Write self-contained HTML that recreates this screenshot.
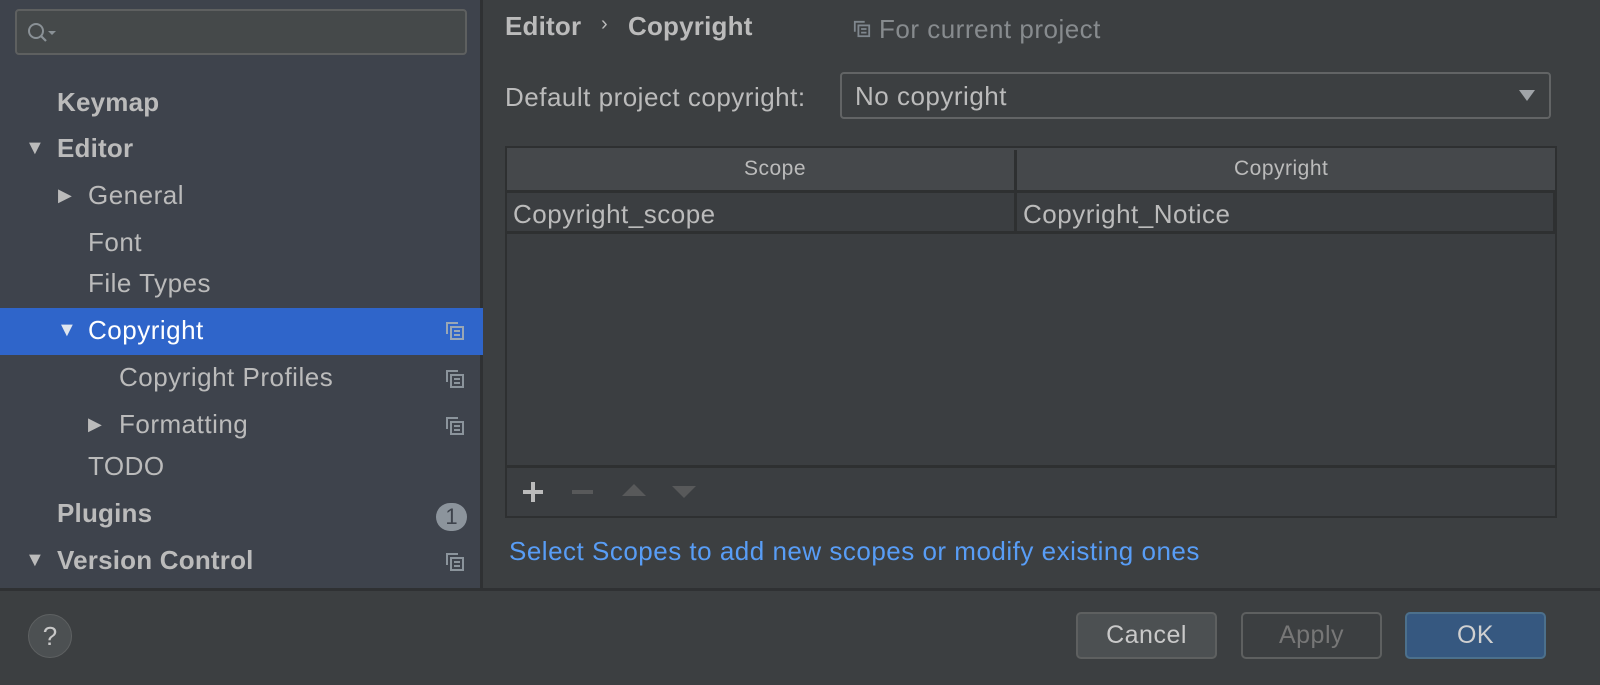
<!DOCTYPE html>
<html><head><style>
*{margin:0;padding:0;box-sizing:border-box}
body{width:1600px;height:685px;background:#3c3f41;font-family:"Liberation Sans",sans-serif;color:#bbbbbb;position:relative;overflow:hidden;letter-spacing:0.5px}
.a{position:absolute;white-space:nowrap}
#side{position:absolute;left:0;top:0;width:483px;height:588px;background:#3e434c;border-right:3px solid #2f3133}
.t{position:absolute;font-size:26px;line-height:47px;height:47px;color:#bbbbbb;white-space:nowrap}
.b{font-weight:bold;letter-spacing:0.2px}
.ic{position:absolute;left:445px;width:20px;height:20px}
</style></head><body>
<div id="side">
  <div class="a" style="left:15px;top:9px;width:452px;height:46px;border:2px solid #5e6060;border-radius:4px;background:#45494a"></div>
  <svg class="a" style="left:26px;top:20px" width="34" height="26" viewBox="0 0 34 26"><circle cx="10" cy="11" r="7" fill="none" stroke="#8a9196" stroke-width="2"/><line x1="15" y1="16" x2="20" y2="21" stroke="#8a9196" stroke-width="2.2"/><polygon points="22,11 30,11 26,15" fill="#8a9196"/></svg>
  <div class="t b" style="left:57px;top:79px">Keymap</div>
  <div class="t" style="left:25px;top:125px;font-size:20px">▼</div>
  <div class="t b" style="left:57px;top:125px">Editor</div>
  <div class="t" style="left:58px;top:172px;font-size:18px">▶</div>
  <div class="t" style="left:88px;top:172px">General</div>
  <div class="t" style="left:88px;top:219px">Font</div>
  <div class="t" style="left:88px;top:260px">File Types</div>
  <div class="a" style="left:0;top:308px;width:483px;height:47px;background:#2f65ca"></div>
  <div class="t" style="left:57px;top:307px;font-size:20px;color:#dfe5ee">▼</div>
  <div class="t" style="left:88px;top:307px;color:#fff">Copyright</div>
  <div class="t" style="left:119px;top:354px">Copyright Profiles</div>
  <div class="t" style="left:88px;top:401px;font-size:18px">▶</div>
  <div class="t" style="left:119px;top:401px">Formatting</div>
  <div class="t" style="left:88px;top:443px">TODO</div>
  <div class="t b" style="left:57px;top:490px">Plugins</div>
  <div class="a" style="left:436px;top:503px;width:31px;height:28px;border-radius:14px;background:#8c949c;color:#3e434c;font-size:22px;text-align:center;line-height:28px;letter-spacing:0">1</div>
  <div class="t" style="left:25px;top:537px;font-size:20px">▼</div>
  <div class="t b" style="left:57px;top:537px">Version Control</div>
  <svg class="ic" style="top:321px" viewBox="0 0 20 20"><path d="M2 13V2h11" fill="none" stroke="#9aa7b5" stroke-width="2"/><rect x="6" y="6" width="12" height="12" fill="none" stroke="#9aa7b5" stroke-width="2"/><path d="M9 10h6M9 14h6" stroke="#9aa7b5" stroke-width="2"/></svg>
  <svg class="ic" style="top:369px" viewBox="0 0 20 20"><path d="M2 13V2h11" fill="none" stroke="#8b949c" stroke-width="2"/><rect x="6" y="6" width="12" height="12" fill="none" stroke="#8b949c" stroke-width="2"/><path d="M9 10h6M9 14h6" stroke="#8b949c" stroke-width="2"/></svg>
  <svg class="ic" style="top:416px" viewBox="0 0 20 20"><path d="M2 13V2h11" fill="none" stroke="#8b949c" stroke-width="2"/><rect x="6" y="6" width="12" height="12" fill="none" stroke="#8b949c" stroke-width="2"/><path d="M9 10h6M9 14h6" stroke="#8b949c" stroke-width="2"/></svg>
  <svg class="ic" style="top:552px" viewBox="0 0 20 20"><path d="M2 13V2h11" fill="none" stroke="#8b949c" stroke-width="2"/><rect x="6" y="6" width="12" height="12" fill="none" stroke="#8b949c" stroke-width="2"/><path d="M9 10h6M9 14h6" stroke="#8b949c" stroke-width="2"/></svg>
</div>

<div class="a b" style="left:505px;top:11px;font-size:26px">Editor</div>
<div class="a" style="left:601px;top:13px;font-size:20px">›</div>
<div class="a b" style="left:628px;top:11px;font-size:26px">Copyright</div>
<svg class="a" style="left:853px;top:20px" width="18" height="18" viewBox="0 0 20 20"><path d="M2 13V2h11" fill="none" stroke="#7f878e" stroke-width="2"/><rect x="6" y="6" width="12" height="12" fill="none" stroke="#7f878e" stroke-width="2"/><path d="M9 10h6M9 14h6" stroke="#7f878e" stroke-width="2"/></svg>
<div class="a" style="left:879px;top:14px;font-size:26px;color:#878b8e">For current project</div>

<div class="a" style="left:505px;top:82px;font-size:26px">Default project copyright:</div>
<div class="a" style="left:840px;top:72px;width:711px;height:47px;border:2px solid #626465;border-radius:4px;background:#3c3f41"></div>
<div class="a" style="left:855px;top:81px;font-size:26px">No copyright</div>
<div class="a" style="left:1519px;top:90px;width:0;height:0;border-left:8px solid transparent;border-right:8px solid transparent;border-top:11px solid #a0a4a8"></div>

<div class="a" style="left:505px;top:146px;width:1052px;height:372px;border:2px solid #2e3031;background:#3b3e41"></div>
<div class="a" style="left:507px;top:148px;width:1048px;height:45px;background:#45484b;border-bottom:3px solid #2e3031"></div>
<div class="a" style="left:1014px;top:150px;width:3px;height:82px;background:#2e3031"></div>
<div class="a" style="left:507px;top:231px;width:1048px;height:3px;background:#2e3031"></div>
<div class="a" style="left:1553px;top:193px;width:3px;height:40px;background:#2e3031"></div>
<div class="a" style="left:744px;top:157px;font-size:21px">Scope</div>
<div class="a" style="left:1234px;top:157px;font-size:21px">Copyright</div>
<div class="a" style="left:513px;top:199px;font-size:26px">Copyright_scope</div>
<div class="a" style="left:1023px;top:199px;font-size:26px">Copyright_Notice</div>
<div class="a" style="left:507px;top:465px;width:1048px;height:3px;background:#2e3031"></div>
<div class="a" style="left:523px;top:490px;width:20px;height:4px;background:#bbbbbb"></div>
<div class="a" style="left:531px;top:482px;width:4px;height:20px;background:#bbbbbb"></div>
<div class="a" style="left:572px;top:490px;width:21px;height:4px;background:#58595a"></div>
<div class="a" style="left:622px;top:484px;width:0;height:0;border-left:12px solid transparent;border-right:12px solid transparent;border-bottom:12px solid #58595a"></div>
<div class="a" style="left:672px;top:486px;width:0;height:0;border-left:12px solid transparent;border-right:12px solid transparent;border-top:12px solid #58595a"></div>

<div class="a" style="left:509px;top:536px;font-size:26px;color:#589df6">Select Scopes to add new scopes or modify existing ones</div>

<div class="a" style="left:0;top:588px;width:1600px;height:3px;background:#2f3133"></div>
<div class="a" style="left:28px;top:614px;width:44px;height:44px;border-radius:50%;background:#4c5052;border:1px solid #5e6162;font-size:26px;text-align:center;line-height:42px;color:#c8c8c8;letter-spacing:0">?</div>
<div class="a" style="left:1076px;top:612px;width:141px;height:47px;border:2px solid #5e6060;border-radius:5px;background:#4c5052;font-size:25px;text-align:center;line-height:43px;color:#c9c9c9">Cancel</div>
<div class="a" style="left:1241px;top:612px;width:141px;height:47px;border:2px solid #5e6060;border-radius:5px;background:#3c3f41;font-size:25px;text-align:center;line-height:43px;color:#777">Apply</div>
<div class="a" style="left:1405px;top:612px;width:141px;height:47px;border:2px solid #4c708c;border-radius:5px;background:#365880;font-size:25px;text-align:center;line-height:43px;color:#d0d0d0">OK</div>
</body></html>
